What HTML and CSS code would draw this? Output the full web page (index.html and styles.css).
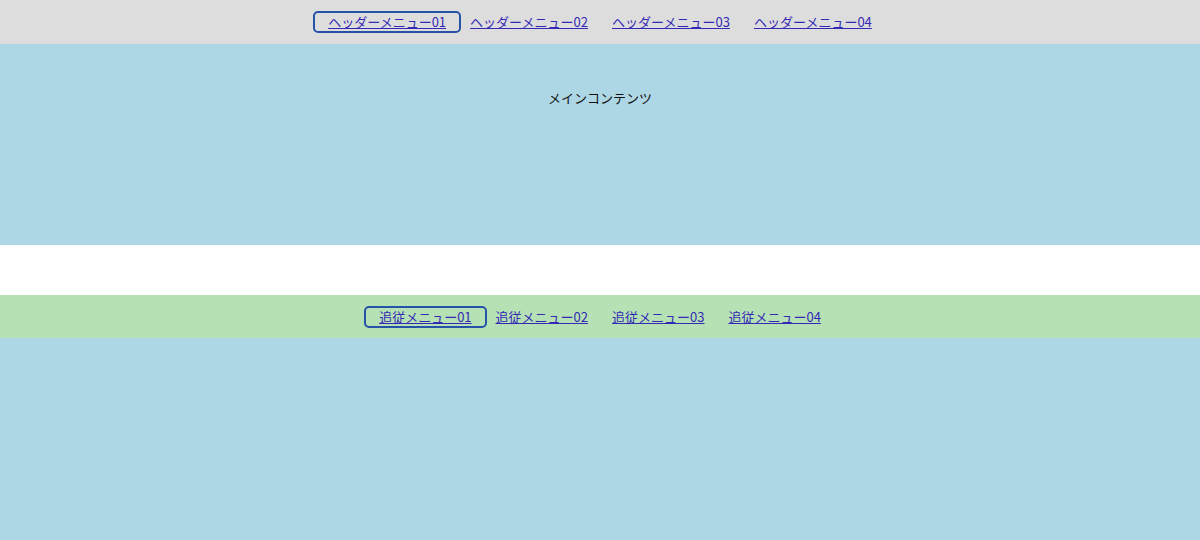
FILE: index.html
```html
<html>
<head>
	<title>追従メニュー</title>
	<meta http-equiv="Content-Type" content="text/html; charset=UTF-8">
	<meta name="viewport" content="width=device-width, initial-scale=1.0">
	<link rel="stylesheet" href="styles.css">
</head>
<body>
	<header class="site-header">
		<nav class="menu">
			<a class="menu-item is-focused" href="#">ヘッダーメニュー01</a>
			<a class="menu-item" href="#">ヘッダーメニュー02</a>
			<a class="menu-item" href="#">ヘッダーメニュー03</a>
			<a class="menu-item" href="#">ヘッダーメニュー04</a>
		</nav>
	</header>

	<main class="main-content">
		<p class="main-title">メインコンテンツ</p>
	</main>

	<div class="spacer"></div>

	<nav class="follow-menu">
		<div class="menu">
			<a class="menu-item is-focused" href="#">追従メニュー01</a>
			<a class="menu-item" href="#">追従メニュー02</a>
			<a class="menu-item" href="#">追従メニュー03</a>
			<a class="menu-item" href="#">追従メニュー04</a>
		</div>
	</nav>

	<section class="sub-content"></section>
</body>
</html>
```

FILE: styles.css
```css
	html, body {
		height: 100%;
	}

	body {
		margin: 0;
		padding: 0;
		background-color: #fff;
		font-family: "Noto Sans CJK JP", "Noto Sans", sans-serif;
		font-size: 13px;
		color: #111;
		overflow: hidden;
	}

	.menu {
		display: flex;
		justify-content: center;
		align-items: center;
		height: 100%;
	}

	.menu-item {
		display: block;
		padding: 0 12px;
		line-height: 16px;
		color: #3429b4;
		text-decoration: underline;
		border-radius: 2px;
	}

	.menu-item.is-focused {
		outline: 2px solid #2652a8;
		outline-offset: 1px;
	}

	.site-header {
		height: 44px;
		background-color: #dddddd;
	}

	.main-content {
		height: 201px;
		background-color: #add7e5;
		box-sizing: border-box;
		padding-top: 44px;
	}

	.main-title {
		margin: 0;
		line-height: 20px;
		text-align: center;
	}

	.spacer {
		height: 50px;
	}

	.follow-menu {
		height: 43px;
		background-color: #b5e1b4;
	}

	.sub-content {
		height: 210px;
		background-color: #add7e5;
	}
```
